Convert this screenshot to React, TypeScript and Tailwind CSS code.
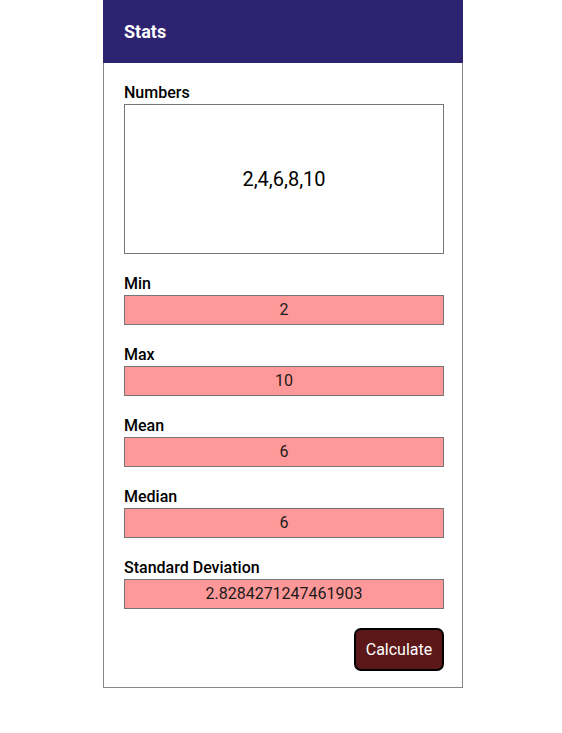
import React from "react";

const fields = [
  { label: "Min", value: "2" },
  { label: "Max", value: "10" },
  { label: "Mean", value: "6" },
  { label: "Median", value: "6" },
  { label: "Standard Deviation", value: "2.8284271247461903" },
];

export default function App() {
  return (
    <div className="w-full bg-white flex justify-start pl-[103px]" style={{ fontFamily: "Roboto, 'Liberation Sans', sans-serif" }}>
      <div className="w-[360px] border border-t-0 border-[#888888] flex flex-col">
        <div className="h-[63px] bg-[#2e2371] flex items-center pl-5 -mx-px">
          <span className="text-white font-bold text-[18px] ml-px">Stats</span>
        </div>
        <div className="pl-5 pr-[18px] pt-[22px] pb-4 flex flex-col">
          <label className="text-[16px] font-medium text-black leading-[15px] mb-1">Numbers</label>
          <div className="h-[150px] border border-[#767676] flex items-center justify-center text-[20px] text-black">
            2,4,6,8,10
          </div>
          {fields.map((f) => (
            <div key={f.label} className="flex flex-col mt-[22px]">
              <label className="text-[16px] font-medium text-black leading-[15px] mb-1">{f.label}</label>
              <div className="h-[30px] border border-[#767676] bg-[#ff9999] flex items-center justify-center text-[16px] text-[#1a1a1a]">
                {f.value}
              </div>
            </div>
          ))}
          <div className="flex justify-end mt-[19px]">
            <button className="h-[43px] w-[90px] bg-[#5c1719] border-2 border-black rounded-[7px] text-white text-[16px]">
              Calculate
            </button>
          </div>
        </div>
      </div>
    </div>
  );
}
